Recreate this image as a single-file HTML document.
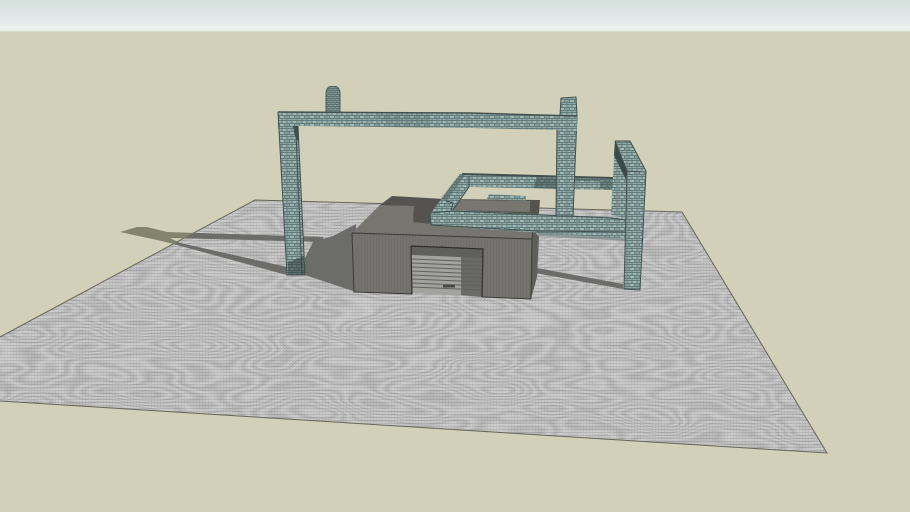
<!DOCTYPE html>
<html><head><meta charset="utf-8"><title>Model</title>
<style>html,body{margin:0;padding:0;background:#d2d0b8}svg{display:block}</style></head>
<body>
<svg xmlns="http://www.w3.org/2000/svg" width="910" height="512" viewBox="0 0 910 512">
<defs>
<linearGradient id="sky" x1="0" y1="0" x2="0" y2="1"><stop offset="0" stop-color="#d5e0dd"/><stop offset="1" stop-color="#ebf0f0"/></linearGradient>
<pattern id="brick" width="10" height="8" patternUnits="userSpaceOnUse">
<rect width="10" height="8" fill="#93adab"/>
<path d="M0 .5H10M0 3.5H10M0 6.5H10M2 0V3.5M7 0V3.5M4.5 3.5V6.5M9.5 3.5V6.5M2 6.5V8M7 6.5V8" stroke="#637b7a" stroke-width=".9" fill="none"/>
<path d="M3 1h3v2H3zM0 4h4v2H0z" fill="#a8c0bd" opacity=".6"/>
<path d="M5 4h4v2H5z" fill="#7a9291" opacity=".6"/>
</pattern>
<pattern id="brickd" width="4" height="4" patternUnits="userSpaceOnUse">
<rect width="4" height="4" fill="#84999a"/>
<path d="M0 .5H4M0 2.5H4M1 0V2.5M3 2.5V4" stroke="#566a69" stroke-width=".7" fill="none"/>
</pattern>
<pattern id="fine" width="3" height="3" patternUnits="userSpaceOnUse">
<rect width="3" height="3" fill="#cbcbcb"/>
<path d="M0 .5H3" stroke="#a9a9a9" stroke-width=".8"/><path d="M1.5 0V3" stroke="#b8b8b8" stroke-width=".6"/>
</pattern>
<pattern id="wall" width="3" height="8" patternUnits="userSpaceOnUse">
<rect width="3" height="8" fill="#74736f"/><path d="M1.5 0V8" stroke="#6d6c68" stroke-width=".7"/>
</pattern>
<filter id="moire" x="0" y="0" width="100%" height="100%" color-interpolation-filters="sRGB">
<feTurbulence type="fractalNoise" baseFrequency="0.009 0.03" numOctaves="2" seed="7"/>
<feColorMatrix type="matrix" values="1 0 0 0 0  1 0 0 0 0  1 0 0 0 0  0 0 0 0 0.09"/>
<feComponentTransfer>
<feFuncR type="table" tableValues="1 0 1 0 1 0 1 0 1 0 1 0 1 0 1 0 1 0 1 0 1 0 1 0 1 0 1 0 1 0 1"/>
<feFuncG type="table" tableValues="1 0 1 0 1 0 1 0 1 0 1 0 1 0 1 0 1 0 1 0 1 0 1 0 1 0 1 0 1 0 1"/>
<feFuncB type="table" tableValues="1 0 1 0 1 0 1 0 1 0 1 0 1 0 1 0 1 0 1 0 1 0 1 0 1 0 1 0 1 0 1"/>
</feComponentTransfer>
</filter>
<filter id="soft" x="0" y="0" width="100%" height="100%"><feGaussianBlur stdDeviation="0.35"/></filter>
<clipPath id="gc"><polygon points="255,200 682,212 827,453 0,401 0,337"/></clipPath>
</defs>

<rect width="910" height="512" fill="#d2d0b8"/>
<rect width="910" height="31" fill="url(#sky)"/>
<rect y="30.5" width="910" height="1" fill="#e2e8dc"/>

<g filter="url(#soft)">
<!-- ground -->
<polygon points="255,200 682,212 827,453 0,401 0,337" fill="url(#fine)"/>
<g clip-path="url(#gc)"><rect x="0" y="200" width="830" height="255" filter="url(#moire)"/></g>
<path d="M0,337 255,200 682,212 827,453 0,401" fill="none" stroke="#66665a" stroke-width="1"/>

<!-- shadows -->
<polygon points="120,232 137,227 147,227 167,232 197,233 323,237 323,242 215,239 170,238 180,243 287,267 287,275 170,243 157,240" fill="#84836d"/>
<g clip-path="url(#gc)">
<polygon points="120,232 137,227 147,227 167,232 197,233 323,237 323,242 215,239 170,238 180,243 287,267 287,275 170,243 157,240" fill="#6c6c6a"/>
<polygon points="356,224 333,236 313,242 305,258 305,275 356,292" fill="#6c6c6a"/>
<polygon points="537,268 623,284 623,289 535,273" fill="#6c6c6a"/>
</g>

<!-- building roof + back volume -->
<polygon points="392,196 445,199 540,200 539,213 532,239 352,233 380,205" fill="#545350"/>
<polygon points="352,233 380,205 414,206 413,222 432,224 533,229 533,240" fill="#767570"/>
<polygon points="453,210 458,200 530,201 530,212" fill="#777671"/>
<polygon points="487,199 489,194 526,196 526,201" fill="url(#brick)"/>

<!-- building walls -->
<polygon points="352,233 532,239 531,299 482,297 483,249 411,246 412,294 354,292" fill="url(#wall)"/>
<polygon points="533,229 539,237 537,277 531,299 532,239" fill="#5f5e5a"/>
<path d="M352,233 532,239 533,229M532,239 531,299M352,233 354,292 412,294M482,297 531,299" stroke="#3a3a38" stroke-width="1" fill="none"/>

<!-- door -->
<polygon points="411,246 483,249 482,297 412,293" fill="#a2a29f"/>
<polygon points="461,248 483,249 482,297 461,295" fill="#6a6a67"/>
<polygon points="411,246 483,249 483,258 412,255" fill="#5f5f5c"/>
<g stroke="#61615f" stroke-width="1" fill="none">
<path d="M412,259 483,262M412,263 483,266M412,267 483,270M412,271 483,274M412,275 483,278M412,279 483,282M412,283 483,286M412,287 483,290"/>
</g>
<path d="M411,246 483,249 482,297M411,246 412,294" stroke="#2f2f2e" stroke-width="1.2" fill="none"/>
<rect x="443" y="285" width="12" height="2.5" fill="#4a4a48"/>

<!-- back beam -->
<polygon points="462,174 613,178 613,190 469,187 469,176" fill="url(#brick)"/>
<path d="M462,174 613,178" stroke="#43504f" stroke-width="2"/>
<polygon points="537,177 556,178 556,189 533,188" fill="#3c4f4e" opacity=".55"/>
<polygon points="573,178 613,180 613,190 600,189 600,181 573,181" fill="#3c4f4e" opacity=".45"/>

<!-- diagonal beam -->
<polygon points="460,174 469,176 469,187 453,210 431,213" fill="url(#brick)"/>
<polygon points="460,174 465,175 446,201 441,198" fill="#4d5f5e" opacity=".5"/>
<path d="M469,176 469,187 453,210" stroke="#3e4e4d" stroke-width="1" fill="none"/>
<path d="M446,201 453,203 451,211" stroke="#3e4e4d" stroke-width="1" fill="none"/>

<!-- right inner post -->
<polygon points="615,141 627,171 625,218 611,215" fill="url(#brick)"/>
<polygon points="615,141 627,171 626,180 614,155" fill="#3a4a49"/>

<!-- lower beam -->
<polygon points="430,213 453,210 556,215 611,217 625,218 628,232 628,238 538,233 431,225" fill="url(#brick)"/>
<path d="M430,213 453,211 611,218 625,220M431,225 538,231 628,232M538,231 538,233" stroke="#43504f" stroke-width="1" fill="none"/>
<path d="M430,213 431,225" stroke="#43504f" stroke-width="1"/>
<polygon points="538,232 628,238 628,241 538,236" fill="#5a7070" opacity=".5"/>

<!-- right front post -->
<polygon points="615,141 630,141 646,171 627,171" fill="url(#brick)"/>
<polygon points="627,171 646,172 640,290 624,289" fill="url(#brick)"/>
<path d="M615,141 630,141 646,171 640,290 624,289 627,171 615,141M627,171 646,172" stroke="#43504f" stroke-width="1" fill="none"/>

<!-- mid post -->
<polygon points="561,98 576,97 577,116 560,115" fill="url(#brick)"/>
<polygon points="557,130 577,116 573,216 556,216" fill="url(#brick)"/>
<path d="M561,98 576,97 577,116 573,216 556,216 557,130M560,115 561,98" stroke="#43504f" stroke-width="1" fill="none"/>

<!-- dome -->
<path d="M326,112 V94 Q326,86 333,86 Q340,86 340,94 V112 Z" fill="url(#brickd)"/>
<path d="M326,112 V94 Q326,86 333,86 Q340,86 340,94 V112" fill="none" stroke="#4b5c5b" stroke-width="1"/>

<!-- top beam -->
<polygon points="278,112 470,113 577,116 577,131 557,130 470,128 298,126 278,128" fill="url(#brick)"/>
<path d="M278,112 470,113 577,116" stroke="#43504f" stroke-width="1.4" fill="none"/>
<polygon points="374,113 430,114 430,128 392,127" fill="#556b6a" opacity=".2"/>

<!-- left post -->
<polygon points="278,112 298,126 305,275 287,275" fill="url(#brick)"/>
<polygon points="278,112 298,115 298,126 293,127 295,140 280,140" fill="url(#brick)"/>
<polygon points="293,126 298,126 299,143 295,136" fill="#3f4f4e"/>
<path d="M278,112 287,275 305,275 298,126M296,135 302,275" stroke="#43504f" stroke-width="1" fill="none"/>
<polygon points="288,262 304,256 305,275 288,275" fill="#2f3b3a" opacity=".55"/>
</g>
</svg>
</body></html>
